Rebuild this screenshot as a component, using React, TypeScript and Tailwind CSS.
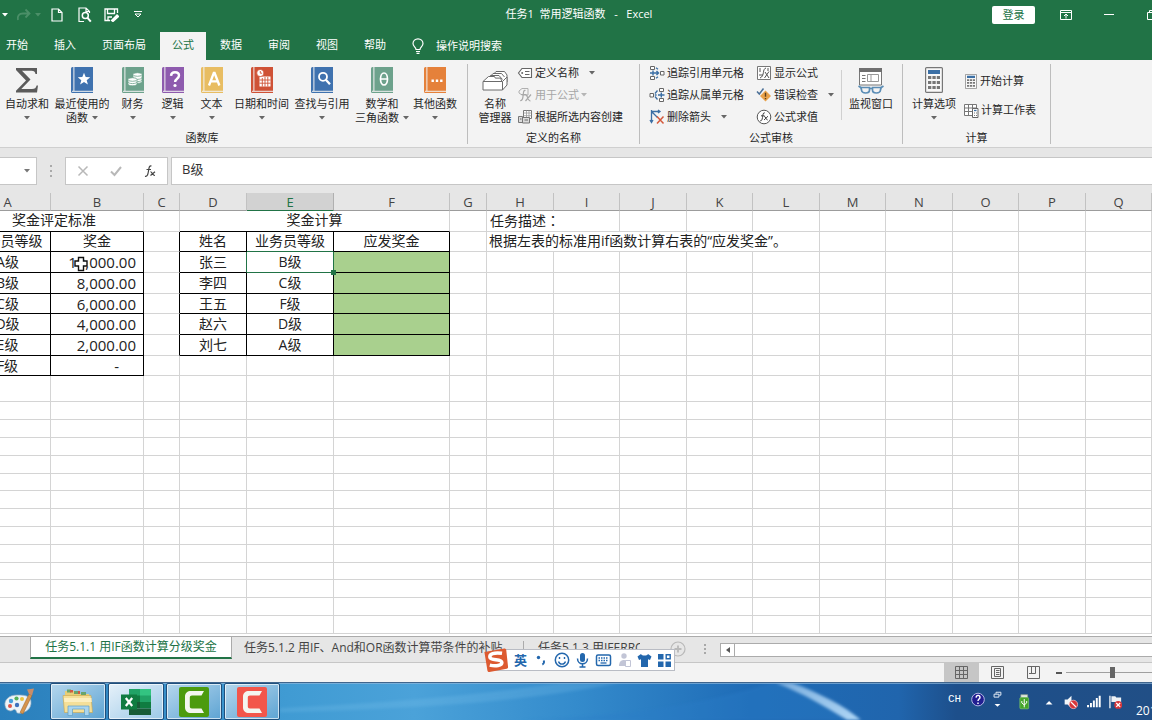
import React from "react";

type Kids = { children?: React.ReactNode };

/* ---------- small shared pieces ---------- */

function Caret({ className = "text-[#666]" }: { className?: string }) {
  return (
    <svg viewBox="0 0 6 4" className={"h-[4px] w-[6px] shrink-0 " + className} aria-hidden="true">
      <path d="M0 0h6L3 3.6z" fill="currentColor" />
    </svg>
  );
}

function Book({ color, children }: Kids & { color: string }) {
  return (
    <svg viewBox="0 0 22 26" className="h-[26px] w-[22px]" aria-hidden="true">
      <path d="M1.5 0H22v26H1.5A1.5 1.5 0 0 1 0 24.500V1.500A1.500 1.500 0 0 1 1.500 0z" fill={color} />
      <path d="M2.900 0v24" stroke="#f3f3f3" strokeWidth="1" />
      <path d="M1 24.300h21" stroke="#f3f3f3" strokeWidth="1" />
      {children}
    </svg>
  );
}

type BigProps = {
  icon: React.ReactNode;
  lines: string[];
  caret?: boolean;
  width: string;
};

function BigButton({ icon, lines, caret = true, width }: BigProps) {
  return (
    <button type="button" className={"flex shrink-0 flex-col items-center pt-[7px] " + width}>
      <span className="flex h-[30px] items-start justify-center">{icon}</span>
      <span className="block h-[14px] leading-[14px] whitespace-nowrap">{lines[0]}</span>
      <span className="flex h-[14px] items-center justify-center gap-1 leading-[14px] whitespace-nowrap">
        {lines[1]}
        {caret && <Caret />}
      </span>
    </button>
  );
}

type SmallProps = { icon: React.ReactNode; label: string; caret?: boolean; muted?: boolean };

function SmallButton({ icon, label, caret, muted }: SmallProps) {
  return (
    <button
      type="button"
      className={"flex h-[22px] items-center gap-[2px] whitespace-nowrap " + (muted ? "text-[#a6a6a6]" : "text-[#262626]")}
    >
      {icon}
      <span>{label}</span>
      {caret && (
        <span className={muted ? "" : "pl-[8px]"}>
          <Caret className={muted ? "text-[#b5b5b5]" : "text-[#666]"} />
        </span>
      )}
    </button>
  );
}

function Group({ label, width, children }: Kids & { label: string; width: string }) {
  return (
    <section aria-label={label} className={"flex shrink-0 flex-col " + width}>
      <div className="flex h-[71px]">{children}</div>
      <div className="text-center leading-[14px]">{label}</div>
    </section>
  );
}

function Separator() {
  return <div className="mt-[4px] h-[80px] w-px shrink-0 bg-[#bdbdbd]" />;
}

/* ---------- icons ---------- */

const SmallIcon = ({ children }: Kids) => (
  <svg viewBox="0 0 16 16" className="h-[16px] w-[16px] shrink-0" fill="none" aria-hidden="true">
    {children}
  </svg>
);

const iconSum = (
  <svg viewBox="0 0 24 26" className="h-[26px] w-[24px]" aria-hidden="true">
    <path d="M1 1h21v6h-1.500c-.5-2.300-1.500-3.200-4-3.200H7l8.500 8.600L6.300 22H17c2.800 0 4-1 4.600-3.500H23L22 25.500H1v-1.700L11 13.600 1 3z" fill="#5b5b5b" />
  </svg>
);

const iconRecent = (
  <Book color="#3f72af">
    <path d="M13 5.800l1.700 4.200 4.500.3-3.500 2.900 1.200 4.400L13 15.100l-3.900 2.500 1.200-4.400-3.500-2.900 4.500-.3z" fill="#fff" />
  </Book>
);

const iconFinance = (
  <Book color="#6da28c">
    <g fill="#fff" stroke="#6da28c" strokeWidth=".8">
      <path d="M11 7.500v7c0 1 2 1.800 4.500 1.800S20 15.500 20 14.500v-7z" />
      <path d="M11 10.500c0 1 2 1.800 4.500 1.800s4.500-.8 4.500-1.800M11 12.800c0 1 2 1.800 4.500 1.800s4.500-.8 4.500-1.800" fill="none" />
      <ellipse cx="15.500" cy="7.500" rx="4.500" ry="1.800" />
      <path d="M6 12.500v4.500c0 1 2 1.800 4.500 1.800S15 18 15 17v-4.500z" />
      <path d="M6 14.800c0 1 2 1.800 4.500 1.800s4.500-.8 4.500-1.800" fill="none" />
      <ellipse cx="10.500" cy="12.500" rx="4.500" ry="1.800" />
    </g>
  </Book>
);

const iconLogic = (
  <Book color="#8e5bae">
    <path d="M9 8.800C9.200 6.500 10.800 5.300 13 5.300c2.400 0 4 1.300 4 3.300 0 3.300-3.900 3-3.900 6.400" stroke="#fff" strokeWidth="2.400" fill="none" />
    <circle cx="13" cy="18.500" r="1.600" fill="#fff" />
  </Book>
);

const iconText = (
  <Book color="#e8bd62">
    <path d="M8 18.500L12.800 6h.8l4.800 12.500M9.800 14.300h6.900" stroke="#fff" strokeWidth="2.300" fill="none" />
  </Book>
);

const iconDate = (
  <Book color="#cf5236">
    <path d="M8.500 9.500h11v10h-11z" fill="#fff" />
    <path d="M8.500 13h11M8.500 16.200h11M11.300 11v8.500M14 10v9.500M16.800 10v9.500" stroke="#cf5236" strokeWidth=".9" />
    <circle cx="9.300" cy="6" r="3.600" fill="#fff" stroke="#cf5236" strokeWidth=".8" />
    <path d="M9.300 4v2.200h1.800" stroke="#cf5236" strokeWidth=".9" fill="none" />
  </Book>
);

const iconLookup = (
  <Book color="#3f72af">
    <circle cx="12" cy="9.800" r="4" fill="none" stroke="#fff" strokeWidth="1.800" />
    <path d="M14.800 12.700l4.200 4.500" stroke="#fff" strokeWidth="2.300" />
  </Book>
);

const iconMath = (
  <Book color="#6da28c">
    <ellipse cx="13" cy="12" rx="3.500" ry="6" fill="none" stroke="#fff" strokeWidth="1.700" />
    <path d="M9.500 12h7" stroke="#fff" strokeWidth="1.500" />
  </Book>
);

const iconMore = (
  <Book color="#e5813a">
    <path d="M7.500 12.500h2.400v2.400H7.500zM11.800 12.500h2.400v2.400h-2.400zM16.100 12.500h2.400v2.400h-2.400z" fill="#fff" />
  </Book>
);

const iconNames = (
  <svg viewBox="0 0 26 26" className="h-[26px] w-[26px]" fill="#fff" stroke="#6b6b6b" aria-hidden="true">
    <path d="M10 9l4-4.500h8.500L25 8v7l-7 7" />
    <path d="M7 11l4-4.500h8.500l3 3.500M4.500 13l4-4.500h8.500l3.500 4" />
    <path d="M1 14.500l5.500-5h6l.8 1.600h5.200l1.500 3.400" />
    <path d="M1 14.500h19.500V23H1z" />
    <path d="M20.500 14.500L25 10v8l-4.500 5z" />
  </svg>
);

const iconTag = (
  <SmallIcon>
    <path d="M5 3.500h9.500v9H5L1.500 8z" fill="#fff" stroke="#666" strokeWidth="1.100" />
    <circle cx="5.200" cy="8" r="1" fill="#666" />
    <path d="M8 6.500h4.500M8 9.500h4.500" stroke="#666" />
  </SmallIcon>
);

const iconUseFx = (
  <SmallIcon>
    <path d="M2 4l3-2.500h6V8H5L2 6z" stroke="#b0b0b0" />
    <path d="M8.500 3.500C6.500 3 6.500 5 6.200 8s-.7 6-3 5.500M4 7.500h5" stroke="#a8a8a8" strokeWidth="1.200" />
    <path d="M8.500 8c2-1 2 6 5 6M14 7.500L8.500 14" stroke="#a8a8a8" strokeWidth="1.200" />
  </SmallIcon>
);

const iconCreate = (
  <SmallIcon>
    <path d="M6.500 1.500h8v8h-8z" fill="#fff" stroke="#777" />
    <path d="M6.500 4h8M9.500 1.500v8M12 1.500v8M6.500 6.700h8" stroke="#999" strokeWidth=".8" />
    <path d="M1.500 7.500h4v6h-4zM5.500 8.500h7v5.500h-7z" fill="#dcdcdc" stroke="#777" />
    <path d="M3 10h1.500M7.500 11h3.500" stroke="#666" />
  </SmallIcon>
);

const iconPrecedents = (
  <SmallIcon>
    <path d="M1.500 1.500h4v3h-4zM1.500 11.500h4v3h-4zM11.500 6.500h3.500v3.500h-3.500z" stroke="#666" fill="#fff" />
    <path d="M1 8h8.500M7.500 6l2 2-2 2M4 5.500v5" stroke="#3b6fa5" strokeWidth="1.400" />
    <path d="M7 2.800l2 1.500M7 13.200l2-1.500" stroke="#3b6fa5" strokeWidth="1.300" />
  </SmallIcon>
);

const iconDependents = (
  <SmallIcon>
    <path d="M1 6.500h3.500V10H1zM10.500 1.500h4v3h-4zM10.500 11.500h4v3h-4z" stroke="#666" fill="#fff" />
    <path d="M9 8h6.500M12.300 5.500v5" stroke="#3b6fa5" strokeWidth="1.400" />
    <path d="M6 6.500l2.500-3M6 9.500l2.500 3M5.800 8h1.800" stroke="#3b6fa5" strokeWidth="1.300" />
  </SmallIcon>
);

const iconRemoveArrows = (
  <SmallIcon>
    <path d="M2.500 1v12M2.500 2.500h8M2.500 2.500l6 6M1 11l1.500 2.500L4 11M9 1l2 1.500L9 4" stroke="#3b6fa5" strokeWidth="1.300" />
    <path d="M8 7.500l6.500 7M14.500 7.500l-6.500 7" stroke="#d4593b" strokeWidth="1.500" />
  </SmallIcon>
);

const iconShowFx = (
  <SmallIcon>
    <path d="M1.500 1.500h13v13h-13z" fill="#fff" stroke="#777" />
    <path d="M4 3v4M10 3c-4 1-1 8-6 10M3 10h4M9 7l4 6M13 6.500L8.500 13M12 3v3" stroke="#555" />
  </SmallIcon>
);

const iconErrorCheck = (
  <SmallIcon>
    <path d="M1 4.500l2.300 2.500L7.500 1.500" stroke="#4a6f97" strokeWidth="1.500" />
    <path d="M9.500 3.500l5.500 5.500-5.500 5.500L4 9z" fill="#e9a24b" />
    <path d="M9.500 5.800v4M9.500 11v1.300" stroke="#5a4020" strokeWidth="1.400" />
  </SmallIcon>
);

const iconEvaluate = (
  <SmallIcon>
    <circle cx="8" cy="8" r="6.800" fill="#fff" stroke="#555" />
    <path d="M8.800 3.800C6.800 3.500 7 6 6.500 8.500S5.800 12 4.200 11.800M5 6.800h3.500M8.200 7.500c1.500-.5 1.500 3.500 3.500 3.500M12 7.200L8 11" stroke="#444" />
  </SmallIcon>
);

const iconWatch = (
  <svg viewBox="0 0 28 30" className="h-[30px] w-[28px]" fill="none" aria-hidden="true">
    <path d="M2.500 1.500h22V18h-22z" fill="#fff" stroke="#777" />
    <path d="M2 1h23v4H2z" fill="#6f6f6f" />
    <path d="M5 8.500h3.500M5 11.500h3.500M5 14.500h3.500" stroke="#777" />
    <path d="M10.500 7.500h11v7h-11zM14 7.500v7" stroke="#999" />
    <g stroke="#5b8db5" strokeWidth="1.700">
      <path d="M4 20.500h8.500V23c0 4-7.500 4-8 0zM15.500 20.500H24l-.5 2.500c-.5 4-8 4-8 0z" fill="#f3f3f3" />
      <path d="M12.500 21.500h3M4.500 21l-3-2M23.500 21l3-2" />
    </g>
  </svg>
);

function Calculator({ big }: { big?: boolean }) {
  return (
    <svg viewBox="0 0 18 26" className={big ? "h-[26px] w-[18px]" : "h-[15px] w-[12px]"} preserveAspectRatio="none" aria-hidden="true">
      <rect x=".6" y=".6" width="16.800" height="24.800" rx="1" fill="#f8f8f8" stroke="#777" strokeWidth="1.200" />
      <path d="M3 3h12v4H3z" fill="#3b6fa5" />
      <path d="M3 9h3.300v3H3zM7.400 9h3.300v3H7.400zM11.800 9H15v3h-3.200zM3 14h3.300v3H3zM7.400 14h3.300v3H7.400zM11.800 14H15v3h-3.200zM3 19h3.300v3H3zM7.400 19h3.300v3H7.400zM11.800 19H15v3h-3.200z" fill="#777" />
    </svg>
  );
}

const iconCalcSheet = (
  <SmallIcon>
    <path d="M1.500 2.500h12v11h-12zM1.500 6h12M1.500 9.500h12M5.500 2.500v11M9.500 2.500v11" stroke="#777" fill="#fff" />
    <path d="M9.500 6.500h5.500v9H9.500z" fill="#fff" stroke="#666" />
    <path d="M11 8.500h2.500" stroke="#3b6fa5" strokeWidth="1.300" />
    <path d="M11 11h1M13 11h1M11 13.500h1M13 13.500h1" stroke="#777" />
  </SmallIcon>
);

/* ---------- title bar and tabs ---------- */

function TitleBar() {
  return (
    <header className="flex h-[29px] items-center overflow-hidden text-white">
      <div className="flex flex-1 items-center pl-[2px]">
        <button type="button" aria-label="撤消选项" className="flex w-[14px] items-center">
          <Caret className="text-white" />
        </button>
        <button type="button" aria-label="恢复" className="flex w-[32px] items-center gap-[3px]">
          <svg viewBox="0 0 16 14" className="h-[14px] w-[16px]" fill="none" stroke="#4b8f68" strokeWidth="1.800" aria-hidden="true">
            <path d="M2 12C1 8 3 5.500 7 5.500h6M9.500 1.500l4 4-4 4" />
          </svg>
          <Caret className="text-[#4b8f68]" />
        </button>
        <button type="button" aria-label="新建" className="flex w-[28px] pl-[3px]">
          <svg viewBox="0 0 12 14" className="h-[14px] w-[12px]" fill="none" stroke="#fff" strokeWidth="1.200" aria-hidden="true">
            <path d="M1 1h6.500L11 4.500V13H1zM7.500 1v3.500H11" />
          </svg>
        </button>
        <button type="button" aria-label="打印预览" className="flex w-[28px] pl-[2px]">
          <svg viewBox="0 0 14 16" className="h-[16px] w-[14px]" fill="none" stroke="#fff" strokeWidth="1.200" aria-hidden="true">
            <path d="M6 14.500H1V1h7l3.500 3.500V6M8 1v3.500h3.500" />
            <circle cx="7.300" cy="8.500" r="3" strokeWidth="1.500" />
            <path d="M9.300 10.700l3.500 4" strokeWidth="2" />
          </svg>
        </button>
        <button type="button" aria-label="保存" className="flex w-[30px]">
          <svg viewBox="0 0 15 14" className="h-[14px] w-[15px]" fill="none" stroke="#fff" strokeWidth="1.300" aria-hidden="true">
            <path d="M6 12.500H1V1h12.500v4M3.500 1v4.500h7V1M4 12.500V9h4" />
            <path d="M7.500 12.500l5.500-5.500 1.500 1.500-5.500 5z" fill="#fff" />
          </svg>
        </button>
        <button type="button" aria-label="自定义快速访问工具栏" className="flex">
          <svg viewBox="0 0 8 7" className="h-[7px] w-[8px]" fill="none" stroke="#fff" aria-hidden="true">
            <path d="M0 .5h8M1 3l3 3 3-3z" />
          </svg>
        </button>
      </div>
      <h1 className="whitespace-pre">{"任务1  常用逻辑函数   -   Excel"}</h1>
      <div className="-mr-[4px] flex flex-1 items-center justify-end">
        <button type="button" className="mr-[25px] h-[18px] w-[43px] rounded-xs bg-white text-center leading-[18px] text-[#217346]">
          登录
        </button>
        <button type="button" aria-label="功能区显示选项" className="mr-[32px]">
          <svg viewBox="0 0 12 10" className="h-[10px] w-[12px]" fill="none" stroke="#fff" aria-hidden="true">
            <path d="M.5.5h11v9H.5zM.5 2.500h11M6 8.500v-4M4 6l2-2 2 2" />
          </svg>
        </button>
        <button type="button" aria-label="最小化" className="mr-[33px] h-px w-[10px] bg-white" />
        <button type="button" aria-label="还原">
          <svg viewBox="0 0 9 10" className="h-[10px] w-[9px]" fill="none" stroke="#fff" aria-hidden="true">
            <path d="M.5 2.500h6v7h-6zM2.500 2.500v-2h6v7h-2" />
          </svg>
        </button>
      </div>
    </header>
  );
}

const ribbonTabs = ["开始", "插入", "页面布局", "公式", "数据", "审阅", "视图", "帮助"];

function RibbonTabs() {
  return (
    <nav className="flex h-[31px] items-end overflow-hidden text-white">
      <div role="tablist" className="-ml-[6px] flex gap-[2px]">
        {ribbonTabs.map((tab) => {
          const active = tab === "公式";
          return (
            <button
              key={tab}
              type="button"
              role="tab"
              aria-selected={active}
              className={"h-[28px] px-3 pb-px whitespace-nowrap " + (active ? "bg-[#f3f3f3] text-[#217346]" : "")}
            >
              {tab}
            </button>
          );
        })}
      </div>
      <button type="button" className="ml-[14px] flex h-[28px] items-center gap-3">
        <svg viewBox="0 0 12 16" className="h-[16px] w-[12px]" fill="none" stroke="#fff" strokeWidth="1.200" aria-hidden="true">
          <path d="M4 11.500C4 9 1 8.500 1 5.500a5 4.700 0 0 1 10 0c0 3-3 3.500-3 6zM4 13.500h4M4.500 15.300h3" />
        </svg>
        操作说明搜索
      </button>
    </nav>
  );
}

function Ribbon() {
  return (
    <div className="flex h-[88px] overflow-hidden border-b border-[#cfcfcf] bg-[#f3f3f3] text-[#262626]">
      <Group label="函数库" width="w-[467px] pr-[63px]">
        <div className="flex pl-[2px]">
          <BigButton width="w-[50px]" icon={iconSum} lines={["自动求和"]} />
          <BigButton width="w-[60px]" icon={iconRecent} lines={["最近使用的", "函数"]} />
          <BigButton width="w-[41px]" icon={iconFinance} lines={["财务"]} />
          <BigButton width="w-[39px]" icon={iconLogic} lines={["逻辑"]} />
          <BigButton width="w-[39px]" icon={iconText} lines={["文本"]} />
          <BigButton width="w-[61px]" icon={iconDate} lines={["日期和时间"]} />
          <BigButton width="w-[60px]" icon={iconLookup} lines={["查找与引用"]} />
          <BigButton width="w-[60px]" icon={iconMath} lines={["数学和", "三角函数"]} />
          <BigButton width="w-[46px]" icon={iconMore} lines={["其他函数"]} />
        </div>
      </Group>
      <Separator />
      <Group label="定义的名称" width="w-[171px]">
        <BigButton width="w-[44px] ml-[5px]" icon={iconNames} lines={["名称", "管理器"]} caret={false} />
        <div className="flex flex-col pt-[2px]">
          <SmallButton icon={iconTag} label="定义名称" caret />
          <SmallButton icon={iconUseFx} label="用于公式" caret muted />
          <SmallButton icon={iconCreate} label="根据所选内容创建" />
        </div>
      </Group>
      <Separator />
      <Group label="公式审核" width="w-[262px]">
        <div className="ml-[9px] flex w-[107px] flex-col pt-[2px]">
          <SmallButton icon={iconPrecedents} label="追踪引用单元格" />
          <SmallButton icon={iconDependents} label="追踪从属单元格" />
          <SmallButton icon={iconRemoveArrows} label="删除箭头" caret />
        </div>
        <div className="flex w-[85px] flex-col pt-[2px]">
          <SmallButton icon={iconShowFx} label="显示公式" />
          <SmallButton icon={iconErrorCheck} label="错误检查" caret />
          <SmallButton icon={iconEvaluate} label="公式求值" />
        </div>
        <div className="mt-[10px] h-[50px] w-px bg-[#d0d0d0]" />
        <BigButton width="w-[58px]" icon={iconWatch} lines={["监视窗口"]} caret={false} />
      </Group>
      <Separator />
      <Group label="计算" width="w-[147px]">
        <BigButton width="w-[62px]" icon={<Calculator big />} lines={["计算选项"]} />
        <div className="flex flex-col gap-[7px] pt-[10px]">
          <SmallButton icon={<span className="pr-px"><Calculator /></span>} label="开始计算" />
          <SmallButton icon={<span className="-ml-[2px]">{iconCalcSheet}</span>} label="计算工作表" />
        </div>
      </Group>
      <Separator />
    </div>
  );
}

function FormulaBar() {
  return (
    <div className="flex items-stretch bg-[#e6e6e6] pt-[9px] pb-[8px]">
      <button type="button" aria-label="名称框" className="flex h-[28px] w-[37px] items-center justify-end border border-l-0 border-[#c6c6c6] bg-white pr-[6px]">
        <Caret className="text-[#777]" />
      </button>
      <div className="flex w-[28px] flex-col items-center justify-center gap-[3px]">
        <span className="h-[2px] w-[2px] bg-[#aaa]" />
        <span className="h-[2px] w-[2px] bg-[#aaa]" />
        <span className="h-[2px] w-[2px] bg-[#aaa]" />
      </div>
      <div className="flex w-[103px] items-center justify-around border border-[#c6c6c6] bg-white">
        <button type="button" aria-label="取消">
          <svg viewBox="0 0 12 12" className="h-[12px] w-[12px]" stroke="#b8b8b8" strokeWidth="1.500" aria-hidden="true">
            <path d="M1.500 1.500l9 9M10.500 1.500l-9 9" />
          </svg>
        </button>
        <button type="button" aria-label="输入">
          <svg viewBox="0 0 12 12" className="h-[12px] w-[12px]" fill="none" stroke="#b8b8b8" strokeWidth="2" aria-hidden="true">
            <path d="M1 6.500L4.500 10 11 2" />
          </svg>
        </button>
        <button type="button" aria-label="插入函数">
          <svg viewBox="0 0 12 14" className="h-[14px] w-[12px]" fill="none" stroke="#444" strokeWidth="1.200" aria-hidden="true">
            <path d="M7.500 2C5 1.500 5 4 4.500 7S3.500 12.800 1 12.300M2.500 5.500H7" />
            <path d="M6.500 8c1.500-.5 2 3.500 4.500 3.500M11 7.800L6.500 11.500" />
          </svg>
        </button>
      </div>
      <input
        aria-label="编辑栏"
        defaultValue="B级"
        className="ml-[3px] min-w-0 flex-1 border border-r-0 border-[#c6c6c6] bg-white px-[10px] pb-[2px] text-[13px] text-[#333] outline-none"
      />
    </div>
  );
}

/* ---------- worksheet ---------- */

const columns: { name: string; width: string }[] = [
  { name: "A", width: "w-[86px]" },
  { name: "B", width: "w-[93px]" },
  { name: "C", width: "w-[36px]" },
  { name: "D", width: "w-[67px]" },
  { name: "E", width: "w-[87px]" },
  { name: "F", width: "w-[116px]" },
  { name: "G", width: "w-[37px]" },
  { name: "H", width: "w-[67px]" },
  { name: "I", width: "w-[66px]" },
  { name: "J", width: "w-[67px]" },
  { name: "K", width: "w-[66px]" },
  { name: "L", width: "w-[67px]" },
  { name: "M", width: "w-[66px]" },
  { name: "N", width: "w-[67px]" },
  { name: "O", width: "w-[66px]" },
  { name: "P", width: "w-[67px]" },
  { name: "Q", width: "" },
];

const GRID = "border-r-[#d4d4d4] border-b-[#d4d4d4]";
const DARK = "border-r-black border-b-black";
const CELL = "overflow-hidden border-r border-b p-0 whitespace-nowrap ";

function Empty({ count }: { count: number }) {
  return (
    <>
      {Array.from({ length: count }, (_, i) => (
        <td key={i} className={CELL + GRID} />
      ))}
    </>
  );
}

const dataRows: { level: string; bonus: string; name?: string; grade?: string }[] = [
  { level: "A级", bonus: "10,000.00", name: "张三", grade: "B级" },
  { level: "B级", bonus: "8,000.00", name: "李四", grade: "C级" },
  { level: "C级", bonus: "6,000.00", name: "王五", grade: "F级" },
  { level: "D级", bonus: "4,000.00", name: "赵六", grade: "D级" },
  { level: "E级", bonus: "2,000.00", name: "刘七", grade: "A级" },
  { level: "F级", bonus: "-" },
];

const rowHeights = ["h-[21px]", "h-[21px]", "h-[20px]", "h-[21px]", "h-[21px]", "h-[20px]"];

const blankRows = [
  "h-[26px]", "h-[18px]", "h-[18px]", "h-[18px]", "h-[18px]", "h-[17px]", "h-[18px]",
  "h-[18px]", "h-[18px]", "h-[18px]", "h-[17px]", "h-[18px]", "h-[18px]", "h-[18px]",
];

function Worksheet() {
  return (
    <main className="relative min-h-0 flex-1 overflow-hidden bg-white">
      <table className="-ml-[35px] w-[calc(100%+35px)] min-w-[1187px] table-fixed border-separate border-spacing-0 text-center text-[14px] leading-[18px] text-[#222]">
        <colgroup>
          {columns.map((c) => (
            <col key={c.name} className={c.width} />
          ))}
        </colgroup>
        <thead>
          <tr className="h-[18px]">
            {columns.map((c) => (
              <th
                key={c.name}
                scope="col"
                className={
                  "border-r border-b p-0 pt-px text-[13px] leading-[16px] font-normal " +
                  (c.name === "E"
                    ? "border-r-[#b0b0b0] border-b-[#217346] bg-[#d2d2d2] text-[#217346]"
                    : "border-r-[#c2c2c2] border-b-[#9c9c9c] bg-[#e6e6e6] text-[#444]")
                }
              >
                {c.name}
              </th>
            ))}
          </tr>
        </thead>
        <tbody>
          <tr className="h-[21px] align-top">
            <td colSpan={2} className={CELL + "border-r-[#d4d4d4] border-b-black"}>奖金评定标准</td>
            <Empty count={1} />
            <td colSpan={3} className={CELL + "border-r-[#d4d4d4] border-b-black"}>奖金计算</td>
            <Empty count={1} />
            <td colSpan={2} className={CELL + GRID + " pl-[3px] text-left"}>
              任务描述<span className="font-['Noto_Sans_CJK_TC']">：</span>
            </td>
            <Empty count={8} />
          </tr>
          <tr className="h-[20px] align-top">
            <td className={CELL + DARK}>业务员等级</td>
            <td className={CELL + DARK}>奖金</td>
            <td className={CELL + "border-r-black border-b-[#d4d4d4]"} />
            <td className={CELL + DARK}>姓名</td>
            <td className={CELL + "border-r-black border-b-[#217346]"}>业务员等级</td>
            <td className={CELL + DARK}>应发奖金</td>
            <Empty count={1} />
            <td colSpan={5} className={CELL + GRID + " pl-[2px] text-left"}>
              根据左表的标准用if函数计算右表的“应发奖金”。
            </td>
            <Empty count={5} />
          </tr>
          {dataRows.map((row, i) => (
            <tr key={row.level} className={rowHeights[i]}>
              <td className={CELL + DARK}>{row.level}</td>
              <td className={CELL + DARK + " text-right text-[15px] " + (row.bonus === "-" ? "pr-[24px]" : "pr-[7px]")}>{row.bonus}</td>
              {row.name ? (
                <>
                  <td className={CELL + "border-r-black border-b-[#d4d4d4]"} />
                  <td className={CELL + (i === 0 ? "border-r-[#217346] border-b-black" : DARK)}>{row.name}</td>
                  {i === 0 ? (
                    <td className="relative border-r border-b border-[#217346] p-0">
                      {row.grade}
                      <span className="pointer-events-none absolute -right-[3px] -bottom-[3px] z-10 h-[5px] w-[5px] bg-[#217346]" />
                    </td>
                  ) : (
                    <td className={CELL + DARK}>{row.grade}</td>
                  )}
                  <td className={CELL + DARK + " bg-[#a9d08e]"} />
                  <Empty count={11} />
                </>
              ) : (
                <Empty count={15} />
              )}
            </tr>
          ))}
          {blankRows.map((h, i) => (
            <tr key={i} className={h}>
              <Empty count={17} />
            </tr>
          ))}
        </tbody>
      </table>
      <svg viewBox="0 0 14 16" className="absolute top-[63px] left-[74px] h-[16px] w-[14px]" aria-hidden="true">
        <path d="M4.500 1.500h5V5H13v5H9.500v4.500h-5V10H1V5h3.500z" fill="#fff" stroke="#111" strokeWidth="1.400" />
      </svg>
    </main>
  );
}

/* ---------- sheet tabs and status bar ---------- */

function SheetTabs() {
  return (
    <div className="flex h-[27px] items-start overflow-hidden border-t border-b border-t-[#ababab] border-b-[#c6c6c6] bg-[#e6e6e6] text-[12px] text-[#444]">
      <div role="tablist" className="flex w-[640px] shrink-0 overflow-hidden pl-[30px] whitespace-nowrap">
        <button type="button" role="tab" aria-selected="true" className="h-[22px] w-[202px] shrink-0 border-x border-b-2 border-x-[#ababab] border-b-[#217346] bg-white text-[#217346]">
          任务5.1.1 用IF函数计算分级奖金
        </button>
        <button type="button" role="tab" aria-selected="false" className="h-[21px] w-[291px] shrink-0 pl-[12px] text-left">
          任务5.1.2 用IF、And和OR函数计算带条件的补贴
        </button>
        <span className="mt-[4px] h-[16px] w-px shrink-0 bg-[#ababab]" />
        <button type="button" role="tab" aria-selected="false" className="h-[21px] shrink-0 pl-[14px]">
          任务5.1.3 用IFERRO
        </button>
      </div>
      <button type="button" aria-label="新工作表" className="mt-[4px] ml-[30px]">
        <svg viewBox="0 0 16 16" className="h-[16px] w-[16px]" fill="none" stroke="#b9b9b9" strokeWidth="1.200" aria-hidden="true">
          <circle cx="8" cy="8" r="7" />
          <path d="M4.500 8h7M8 4.500v7" strokeWidth="1.800" />
        </svg>
      </button>
      <div className="mt-[7px] ml-[18px] flex flex-col gap-[2px]">
        <span className="h-[2px] w-[2px] bg-[#a8a8a8]" />
        <span className="h-[2px] w-[2px] bg-[#a8a8a8]" />
        <span className="h-[2px] w-[2px] bg-[#a8a8a8]" />
      </div>
      <div className="mt-[6px] ml-[14px] flex h-[14px] min-w-0 flex-1">
        <button type="button" aria-label="向左滚动" className="flex w-[15px] items-center justify-center border border-[#ababab] bg-white">
          <svg viewBox="0 0 4 6" className="h-[6px] w-[4px]" aria-hidden="true">
            <path d="M4 0v6L0 3z" fill="#555" />
          </svg>
        </button>
        <div className="flex-1 border-y border-[#ababab] bg-white" />
      </div>
    </div>
  );
}

function StatusBar() {
  return (
    <div className="flex h-[19px] items-center justify-end bg-[#f3f3f3]">
      <button type="button" aria-label="普通" className="flex h-full w-[35px] items-center justify-center bg-[#c6c6c6]">
        <svg viewBox="0 0 13 13" className="h-[13px] w-[13px]" fill="none" stroke="#666" aria-hidden="true">
          <path d="M.5.5h12v12H.5zM.5 4.500h12M.5 8.500h12M4.500.5v12M8.500.5v12" />
        </svg>
      </button>
      <button type="button" aria-label="页面布局视图" className="flex h-full w-[36px] items-center justify-center">
        <svg viewBox="0 0 13 13" className="h-[13px] w-[13px]" fill="none" stroke="#666" aria-hidden="true">
          <path d="M.5.5h12v12H.5zM3.500 2.500h6v8h-6zM5 4.500h3.500M5 6.500h3.500M5 8.500h3.500" />
        </svg>
      </button>
      <button type="button" aria-label="分页预览" className="flex h-full w-[36px] items-center justify-center">
        <svg viewBox="0 0 13 13" className="h-[13px] w-[13px]" fill="none" stroke="#666" aria-hidden="true">
          <path d="M.5.5h12v12H.5zM4.500.5v7M8.500.5v7M2 7.500h6.500" />
        </svg>
      </button>
      <button type="button" aria-label="缩小" className="ml-[5px] h-[2px] w-[6px] bg-[#555]" />
      <input
        type="range"
        aria-label="显示比例"
        min={0}
        max={100}
        defaultValue={54}
        className="ml-[4px] h-[11px] w-[86px] appearance-none bg-transparent [&::-webkit-slider-runnable-track]:h-px [&::-webkit-slider-runnable-track]:bg-[#a0a0a0] [&::-webkit-slider-thumb]:-mt-[5px] [&::-webkit-slider-thumb]:h-[11px] [&::-webkit-slider-thumb]:w-[5px] [&::-webkit-slider-thumb]:appearance-none [&::-webkit-slider-thumb]:bg-[#666]"
      />
    </div>
  );
}

/* ---------- input method bar ---------- */

function InputMethodBar() {
  return (
    <div className="absolute bottom-[49px] left-[494px] flex h-[22px] items-center border border-[#b9bcc4] bg-white pl-[18px] text-[#2367ad]">
      <svg viewBox="0 0 28 28" className="absolute -top-[3px] -left-[12px] h-[26px] w-[26px]" aria-hidden="true">
        <path d="M1.500 5.500L23 1.500c1 0 1.800.6 2 1.500l2 18.500c0 1-.6 1.800-1.500 2L7 27c-1 .2-2-.5-2.200-1.500z" fill="#dd5a30" />
        <path d="M20.500 6.800C12 5.500 6.500 7.500 7.500 11.300c1 3.500 12.500 1.500 12.800 5.200.3 3.700-7 4.500-13 3" fill="none" stroke="#fff" strokeWidth="3.800" />
      </svg>
      <button type="button" className="w-[19px] pl-[1px] text-left text-[13px] leading-[20px] font-bold">英</button>
      <svg viewBox="0 0 142 18" className="h-[18px] w-[142px]" fill="none" stroke="#2367ad" role="img" aria-label="输入法工具">
        <circle cx="6.500" cy="6.500" r="1.700" fill="#2367ad" stroke="none" />
        <path d="M11.500 9.500c1.200 1.500.3 3.200-1.200 4" strokeWidth="2" />
        <circle cx="30" cy="9" r="6.700" strokeWidth="1.500" />
        <path d="M27.500 6v2M32.500 6v2M26.500 10.500c1 3.500 6 3.500 7 0" strokeWidth="1.400" />
        <rect x="48" y="2" width="5" height="9" rx="2.500" fill="#2367ad" stroke="none" />
        <path d="M45.500 7.500c0 7 10 7 10 0M50.500 13v3M47.500 16h6" strokeWidth="1.500" />
        <rect x="64.500" y="4" width="14" height="10.500" rx="1.500" strokeWidth="1.500" />
        <path d="M66.500 7h10M66.500 9.500h10" strokeDasharray="1.500 1" strokeWidth="1.500" />
        <path d="M68.500 12h6" strokeWidth="1.300" />
        <circle cx="92" cy="5" r="2.700" fill="#c2c5d6" stroke="none" />
        <path d="M87 15c0-4 2-6 5-6s4 1 4 2v4z" fill="#c2c5d6" stroke="none" />
        <path d="M93.500 9.500h5v6h-5z" fill="#fff" stroke="#c2c5d6" />
        <path d="M109 3l-3.500 2.500 1.500 3.500 2-.8V16h7V8.200l2 .8 1.500-3.500L116 3c-1 2-6 2-7 0z" fill="#2367ad" stroke="none" />
        <path d="M126 3h5.500v5.500H126zM126 10.500h5.500V16H126zM133.500 10.500h5.500V16h-5.500z" fill="#2367ad" stroke="none" />
        <path d="M134.200 3.700h4v4h-4z" strokeWidth="1.400" />
      </svg>
    </div>
  );
}

/* ---------- taskbar ---------- */

function TaskButton({ label, active, children }: Kids & { label: string; active?: boolean }) {
  return (
    <button
      type="button"
      aria-label={label}
      className={
        "flex h-[37px] w-[56px] items-center justify-center rounded-xs border border-[#1f4f7c] shadow-[inset_0_0_0_1px_rgba(255,255,255,0.65)] " +
        (active ? "bg-linear-to-br from-[#e6f1f9] to-[#9cc9e8]" : "bg-linear-to-br from-[#b5d7ed] to-[#5da4d3]")
      }
    >
      {children}
    </button>
  );
}

function CamtasiaIcon({ color }: { color: string }) {
  return (
    <svg viewBox="0 0 30 30" className="h-[30px] w-[30px]" aria-hidden="true">
      <rect width="30" height="30" rx="2" fill={color} />
      <path d="M25 4H12c-3.500 0-6 2-6 5.500v11c0 3.500 2.500 5.500 6 5.500h13l-2.500-4.500H13c-1.500 0-2.200-.7-2.200-2v-9c0-1.300.7-2 2.200-2h9.500z" fill="#f3f6f0" />
    </svg>
  );
}

function Taskbar() {
  return (
    <footer className="relative flex h-[38px] items-center overflow-hidden border-t border-[#40658c] bg-[#3184c8] text-white">
      <svg viewBox="0 0 1152 38" preserveAspectRatio="none" className="absolute inset-0 h-full w-full" aria-hidden="true">
        <defs>
          <linearGradient id="sky" x1="0" x2="1" y1="0" y2="0">
            <stop offset="0" stopColor="#2a7fbc" />
            <stop offset=".25" stopColor="#409bd3" />
            <stop offset=".36" stopColor="#4ba2d9" />
            <stop offset=".5" stopColor="#348bcc" />
            <stop offset=".65" stopColor="#1f6cb7" />
            <stop offset=".78" stopColor="#2065ad" />
            <stop offset=".83" stopColor="#1d4f8b" />
            <stop offset="1" stopColor="#214f86" />
          </linearGradient>
          <linearGradient id="beam" x1="0" x2="1" y1="0" y2="1">
            <stop offset="0" stopColor="#cfe9ff" stopOpacity=".5" />
            <stop offset="1" stopColor="#b5dcfa" stopOpacity=".95" />
          </linearGradient>
          <filter id="soft">
            <feGaussianBlur stdDeviation="1.500" />
          </filter>
        </defs>
        <path d="M0 0h1152v38H0z" fill="url(#sky)" />
        <path d="M280 26C380 20 470 14 560 0h60c-90 18-190 26-340 30z" fill="#8accf2" opacity=".2" filter="url(#soft)" />
        <path d="M520 38c90-2 180-14 250-38h30c20 12 35 24 44 38z" fill="#2c7dc8" opacity=".35" filter="url(#soft)" />
        <path d="M776 0h16c27 10 53 24 69 38h-14C825 24 804 11 776 0z" fill="url(#beam)" filter="url(#soft)" />
        <path d="M0 .5h1152" stroke="#8fb9dc" opacity=".7" />
      </svg>
      <div className="relative flex flex-1 items-center gap-[2px]">
        <button type="button" aria-label="画图" className="flex h-[37px] w-[48px] items-center pl-[4px]">
          <svg viewBox="0 0 30 30" className="h-[30px] w-[30px]" aria-hidden="true">
            <path d="M13 8C5 8 0 13 1 18.500 2 24 7 25 9 23c2-1.500 3 0 3.500 2 .5 3 13.500 1 14.500-8S20 8 13 8z" fill="#ecf3f8" stroke="#8fa9bc" strokeWidth=".7" />
            <circle cx="7" cy="14" r="2.200" fill="#45a0dd" />
            <circle cx="12.500" cy="11.500" r="2.100" fill="#55b05a" />
            <circle cx="6" cy="19" r="2" fill="#df5548" />
            <circle cx="18" cy="12" r="2" fill="#eec440" />
            <circle cx="13" cy="18" r="2.200" fill="#3d70bd" />
            <path d="M25 7l3 1.500-9 18.500-3-1.500z" fill="#d6944c" stroke="#936131" strokeWidth=".5" />
            <path d="M23 2.500l7-1-2 7-3-1.500z" fill="#c98d69" />
          </svg>
        </button>
        <TaskButton label="文件资源管理器">
          <svg viewBox="0 0 32 30" className="h-[30px] w-[32px]" aria-hidden="true">
            <path d="M3 4h9l1 3h14v6H3z" fill="#e9ce77" />
            <path d="M5 2.500h4v3H5zM12 4h4v3h-4zM19 5h5v3h-5z" fill="#6aa56b" />
            <path d="M8 3h3v2.500H8zM16 4h2v3h-2z" fill="#cf5a43" />
            <path d="M1 8.500h28l1.500 17H2.500z" fill="#f5df98" stroke="#c9a64b" strokeWidth=".6" />
            <path d="M2 11h27.500l.3 4H2.300z" fill="#fcefc0" />
            <path d="M6 28.500V19h21v9.500h-4.500V22h-12v6.500z" fill="#a9d5ef" stroke="#5f9dc6" strokeWidth=".7" />
          </svg>
        </TaskButton>
        <TaskButton label="Excel" active>
          <svg viewBox="0 0 30 26" className="h-[26px] w-[30px]" aria-hidden="true">
            <path d="M8 0h11v13H8z" fill="#21a366" />
            <path d="M19 0h11v7H19z" fill="#33c481" />
            <path d="M8 6.500h11V13H8z" fill="#107c41" />
            <path d="M19 6.500h11V13H19z" fill="#21a366" />
            <path d="M8 13h11v6.500H8z" fill="#185c37" />
            <path d="M19 13h11v6.500H19z" fill="#107c41" />
            <path d="M8 19.500h22V26H8z" fill="#185c37" />
            <path d="M0 5.500h16v15H0z" fill="#107c41" />
            <path d="M4.800 9l6.400 8M11.200 9l-6.400 8" stroke="#fff" strokeWidth="2.200" />
          </svg>
        </TaskButton>
        <TaskButton label="Camtasia">
          <CamtasiaIcon color="#4c9b0f" />
        </TaskButton>
        <TaskButton label="Camtasia Recorder">
          <CamtasiaIcon color="#f2564b" />
        </TaskButton>
      </div>
      <div className="relative flex h-full items-center">
        <span className="w-[20px] pb-[4px] font-['Liberation_Mono'] text-[11px]">CH</span>
        <svg viewBox="0 0 168 38" className="h-full w-[168px]" fill="none" role="img" aria-label="通知区域">
          <circle cx="8" cy="17" r="6.500" fill="#221f91" stroke="#b5b8e5" />
          <path d="M6 15c.3-3.300 4.300-2.800 4 0-.2 1.500-2 1.500-2 3.500M8 20v1.500" stroke="#fff" strokeWidth="1.500" />
          <path d="M24.500 11.500h5v3h-5zM26.500 11V9.500h5v3H30" stroke="#e6eef7" />
          <path d="M25 21.500h6l-3 3z" fill="#fff" />
          <path d="M52 12h7v3h-7z" fill="#dfe8dc" stroke="#8ca08a" strokeWidth=".6" />
          <rect x="51" y="15" width="9" height="11.500" rx="1" fill="#45a52b" stroke="#82cc6a" strokeWidth=".7" />
          <path d="M55.500 16.500V25M53 18.500v2l2.500 2 2.500-2v-2" stroke="#fff" />
          <path d="M77.500 22l3.500-3.500 3.500 3.500z" fill="#fff" />
          <path d="M97 17h3l4-4v13l-4-4h-3z" fill="#f2f5f8" />
          <circle cx="106" cy="22" r="4.300" fill="#d8363a" stroke="#f6b4b4" strokeWidth=".8" />
          <path d="M103.500 19.500l5 5" stroke="#fff" strokeWidth="1.300" />
          <path d="M121 22.500v2.500M124 20.500V25M127 18v7M130 15.500V25M133 13v12" stroke="#fff" strokeWidth="2" />
          <path d="M143.500 13v13" stroke="#fff" strokeWidth="1.300" />
          <path d="M145 13.500h4l1 1.500h5v6h-5l-1-1.500h-4z" fill="#edf1f5" />
          <circle cx="152" cy="22.500" r="4" fill="#d8363a" />
          <path d="M150 20.500l4 4M154 20.500l-4 4" stroke="#fff" strokeWidth="1.300" />
        </svg>
        <div className="w-[16px] overflow-hidden pt-[18px] text-[12px] leading-[16px]">201</div>
      </div>
    </footer>
  );
}

export default function App() {
  return (
    <div className="relative flex h-screen flex-col overflow-hidden bg-white font-['Open_Sans','Noto_Sans_CJK_SC',sans-serif] text-[11px]">
      <div className="shrink-0 bg-[#217346]">
        <TitleBar />
        <RibbonTabs />
      </div>
      <div className="shrink-0">
        <Ribbon />
        <FormulaBar />
      </div>
      <Worksheet />
      <div className="relative shrink-0">
        <SheetTabs />
        <StatusBar />
        <Taskbar />
        <InputMethodBar />
      </div>
    </div>
  );
}
